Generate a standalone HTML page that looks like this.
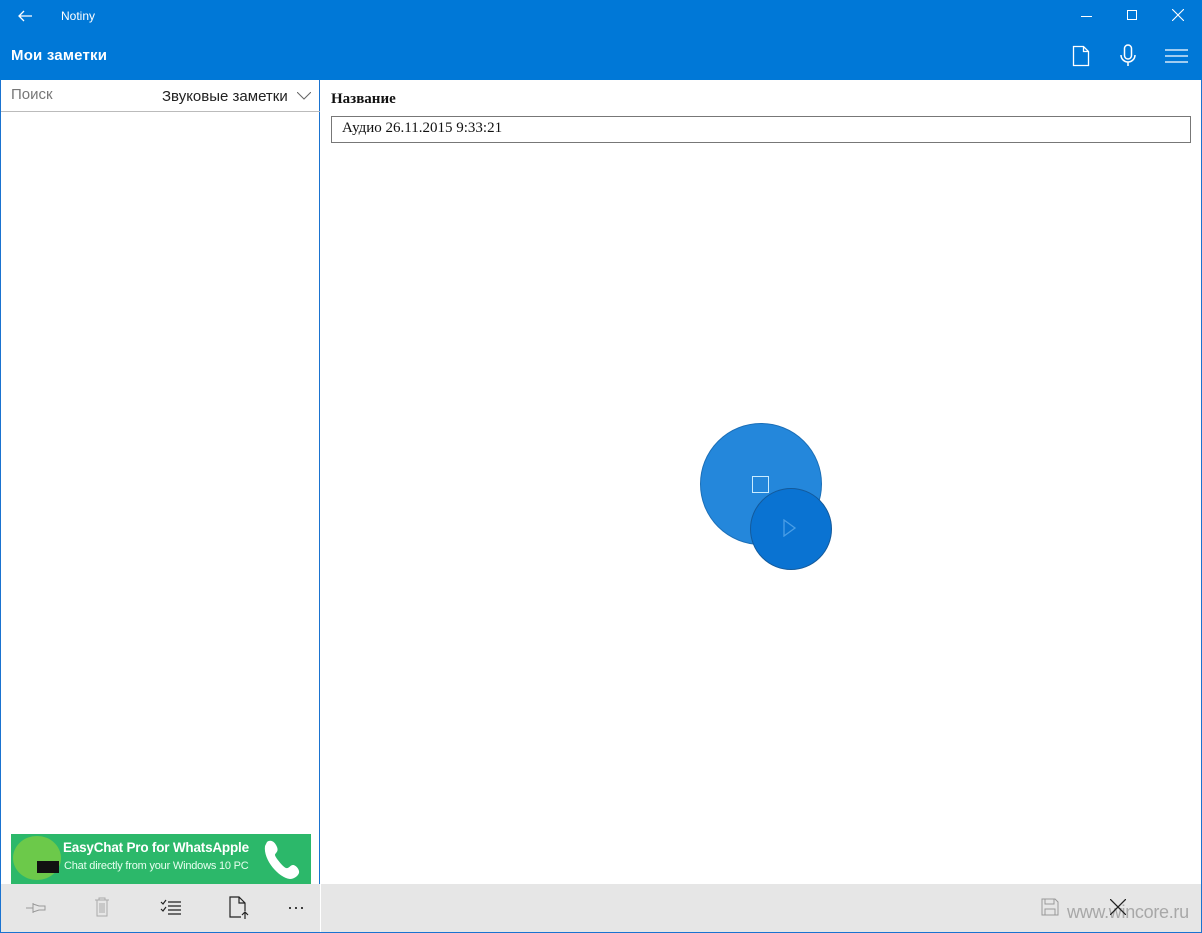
<!DOCTYPE html>
<html><head><meta charset="utf-8"><style>
*{margin:0;padding:0;box-sizing:border-box}
html,body{width:1202px;height:933px;overflow:hidden;background:#fff;font-family:"Liberation Sans",sans-serif}
.win{position:absolute;left:0;top:0;width:1202px;height:933px;border:1px solid #1a73d0}
.top{position:absolute;left:0;top:0;width:1202px;height:80px;background:#0078d7;color:#fff}
.abs{position:absolute}
.left{position:absolute;left:1px;top:80px;width:319px;height:852px;border-right:1px solid #1a73d0}
.bar{position:absolute;top:884px;height:48px;background:#e6e6e6}
</style></head><body>
<div class="win"></div>
<div class="top">
  <svg class="abs" style="left:17px;top:9px" width="16" height="14" viewBox="0 0 16 14"><path d="M15 7H2M7 2L2 7l5 5" stroke="#fff" stroke-width="1.3" fill="none"/></svg>
  <div class="abs" style="left:61px;top:9px;font-size:12px">Notiny</div>
  <div class="abs" style="left:1081px;top:16px;width:11px;height:1px;background:#fff"></div>
  <div class="abs" style="left:1127px;top:10px;width:10px;height:10px;border:1px solid #fff"></div>
  <svg class="abs" style="left:1172px;top:9px" width="12" height="12"><path d="M0 0L12 12M12 0L0 12" stroke="#fff" stroke-width="1.1"/></svg>
  <div class="abs" style="left:11px;top:47px;font-size:15px;font-weight:bold;letter-spacing:0.2px">Мои заметки</div>
  <svg class="abs" style="left:1072px;top:45px" width="18" height="22"><path d="M1.5 1.5h10l5 5v14h-15z M11.5 1.5v5h5" stroke="#fff" stroke-width="1.3" fill="none"/></svg>
  <svg class="abs" style="left:1119px;top:44px" width="18" height="24"><rect x="5.5" y="1" width="7" height="14" rx="3.5" stroke="#fff" stroke-width="1.5" fill="none"/><path d="M2 11a7 7 0 0 0 14 0M9 18v4" stroke="#fff" stroke-width="1.5" fill="none"/></svg>
  <svg class="abs" style="left:1165px;top:49px" width="23" height="14"><path d="M0 1h23M0 7h23M0 13h23" stroke="#fff" stroke-width="1.2"/></svg>
</div>
<div class="left">
  <div class="abs" style="left:10px;top:6px;font-size:15px;color:#777">Поиск</div>
  <div class="abs" style="left:161px;top:8px;font-size:15px;color:#222">Звуковые заметки</div>
  <svg class="abs" style="left:296px;top:12px" width="14" height="8"><path d="M0 0l7 7 7-7" stroke="#666" fill="none"/></svg>
  <div class="abs" style="left:0;top:31px;width:319px;height:1px;background:#bbb"></div>
  <div class="abs" style="left:10px;top:754px;width:300px;height:50px;background:#2cb86a;overflow:hidden">
    <div class="abs" style="left:2px;top:2px;width:48px;height:44px;border-radius:50%;background:#6cc94a"></div>
    <div class="abs" style="left:26px;top:27px;width:22px;height:12px;background:#111"></div>
    <div class="abs" style="left:52px;top:6px;color:#fff;font-weight:bold;font-size:13.5px;letter-spacing:-0.2px">EasyChat Pro for WhatsApple</div>
    <div class="abs" style="left:53px;top:26px;color:#e8fff0;font-size:11px;letter-spacing:-0.2px">Chat directly from your Windows 10 PC</div>
    <svg class="abs" style="left:250px;top:4px" width="44" height="44" viewBox="0 0 44 44"><path d="M6 4c4-3 8 0 10 5s-2 6-2 8 8 12 11 13 4-3 7-3 7 5 6 8-5 6-9 6C18 40 2 22 4 8z" fill="#fff"/></svg>
  </div>
</div>
<div class="bar" style="left:1px;width:319px">
  <svg class="abs" style="left:25px;top:17px" width="22" height="14"><path d="M0 7h7M7 2v10M7 3l6 2h6v4h-6l-6 2" stroke="#999" fill="none"/></svg>
  <svg class="abs" style="left:93px;top:13px" width="16" height="20"><path d="M1 3h14M5 3V1h6v2M3 3v16h10V3M6 6v10M8 6v10M10 6v10" stroke="#aaa" fill="none"/></svg>
  <svg class="abs" style="left:159px;top:15px" width="22" height="16"><path d="M1 3l2 2 3-4M1 10l2 2 3-4M8 3h13M8 7h13M8 11h13M8 15h13" stroke="#222" stroke-width="1.2" fill="none"/></svg>
  <svg class="abs" style="left:228px;top:12px" width="20" height="24"><path d="M12 21H1V1h9l6 6v8M10 1v6h6M16 23v-7M13 19l3-3 3 3" stroke="#222" stroke-width="1.2" fill="none"/></svg>
  <div class="abs" style="left:286px;top:13px;font-size:18px;color:#222">···</div>
</div>
<div class="bar" style="left:321px;width:880px">
  <svg class="abs" style="left:720px;top:14px" width="18" height="18"><path d="M1 1h13l3 3v13H1zM4 1v5h9V1M4 17v-6h10v6" stroke="#999" fill="none"/></svg>
  <div class="abs" style="left:746px;top:18px;font-size:18px;color:#a8a8a8;letter-spacing:-0.3px">www.wincore.ru</div>
  <svg class="abs" style="left:789px;top:15px" width="16" height="16"><path d="M0 0L16 16M16 0L0 16" stroke="#222" stroke-width="1.3"/></svg>
</div>
<div class="abs" style="left:331px;top:91px;font-family:'Liberation Serif',serif;font-weight:bold;font-size:15px;color:#111">Название</div>
<div class="abs" style="left:331px;top:116px;width:860px;height:27px;border:1px solid #777;padding:3px 10px;font-family:'Liberation Serif',serif;font-size:15px;color:#111">Аудио 26.11.2015 9:33:21</div>
<div class="abs" style="left:700px;top:423px;width:122px;height:122px;border-radius:50%;background:#2487db;border:1px solid #1b6fb8"></div>
<div class="abs" style="left:752px;top:476px;width:17px;height:17px;border:1.5px solid #c9ecff"></div>
<div class="abs" style="left:750px;top:488px;width:82px;height:82px;border-radius:50%;background:#0a73d2;border:1px solid #135a9c"></div>
<svg class="abs" style="left:783px;top:519px" width="14" height="18"><path d="M1 1l11 8-11 8z" stroke="#4a9ee6" stroke-width="1.3" fill="none"/></svg>
</body></html>
